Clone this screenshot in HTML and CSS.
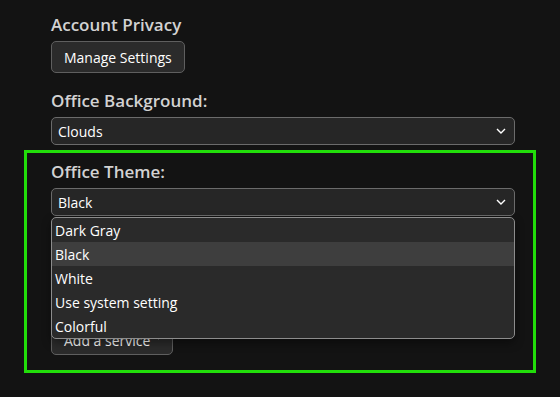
FILE: index.html
```html
<!DOCTYPE html>
<html lang="en">
  <head>
    <meta charset="UTF-8" />
    <title>Account Settings</title>
    <link rel="stylesheet" href="styles.css">
  </head>
  <body>
    <div class="settings">
      <section class="group">
        <h2>Account Privacy</h2>
        <button class="btn">Manage Settings</button>
      </section>

      <section class="group">
        <h2>Office Background:</h2>
        <div class="select">
          <span>Clouds</span>
          <svg class="chev" viewBox="0 0 10 6" width="10" height="6"><path d="M1 1l4 4 4-4" /></svg>
        </div>
      </section>

      <div class="highlight">
        <section class="group">
          <h2>Office Theme:</h2>
          <div class="select-wrap">
            <div class="select">
              <span>Black</span>
              <svg class="chev" viewBox="0 0 10 6" width="10" height="6"><path d="M1 1l4 4 4-4" /></svg>
            </div>
            <ul class="options">
              <li>Dark Gray</li>
              <li class="active">Black</li>
              <li>White</li>
              <li>Use system setting</li>
              <li>Colorful</li>
            </ul>
          </div>
        </section>

        <section class="group services">
          <button class="btn add">Add a service
            <svg class="chev small" viewBox="0 0 10 6" width="7" height="5"><path d="M1 1l4 4 4-4" /></svg>
          </button>
        </section>
      </div>
    </div>
  </body>
</html>
```

FILE: styles.css
```css
* {
  padding: 0;
  margin: 0;
  box-sizing: border-box;
  font-family: "Open Sans", "Noto Sans", sans-serif;
}
body {
  background: #131313;
  color: #ffffff;
  width: 560px;
  height: 397px;
  overflow: hidden;
}
.settings {
  padding: 13px 0 0 24px;
  width: 540px;
}
.group {
  padding-left: 27px;
  padding-right: 25px;
}
.group h2 {
  font-size: 17px;
  font-weight: 600;
  color: #d2d2d2;
  line-height: 24px;
  margin-bottom: 4px;
}
.group + .group {
  margin-top: 16px;
}
.btn {
  background: #2b2b2b;
  color: #ffffff;
  border: 1px solid #5f5f5f;
  border-radius: 5px;
  font-size: 14px;
  height: 32px;
  padding: 0 12px;
  cursor: pointer;
}
.select {
  display: flex;
  align-items: center;
  justify-content: space-between;
  height: 28px;
  background: #262626;
  border: 1px solid #6b6b6b;
  border-radius: 5px;
  padding: 0 8px 0 6px;
  font-size: 14px;
}
.chev {
  fill: none;
  stroke: #ffffff;
  stroke-width: 1.4;
}
.highlight {
  margin-top: 5px;
  width: 512px;
  height: 223px;
  border: 3px solid #22dd0a;
  padding-top: 7px;
}
.highlight .group {
  padding-left: 24px;
  padding-right: 18px;
}
.select-wrap {
  position: relative;
}
.options {
  position: absolute;
  top: 29px;
  left: 0;
  right: 0;
  list-style: none;
  background: #2a2a2a;
  border: 1px solid #8c8c8c;
  border-radius: 5px;
  overflow: hidden;
  z-index: 2;
  box-shadow: 0 4px 10px rgba(0, 0, 0, 0.4);
}
.options li {
  height: 24px;
  line-height: 25px;
  padding-left: 3px;
  font-size: 14px;
  color: #ffffff;
}
.options li.active {
  background: #3e3e3e;
}
.highlight .services {
  margin-top: 106px;
}
.add {
  height: 33px;
  padding: 4px 10px 0 12px;
  display: flex;
  align-items: center;
  gap: 5px;
}
.chev.small {
  margin-bottom: 6px;
}
```
